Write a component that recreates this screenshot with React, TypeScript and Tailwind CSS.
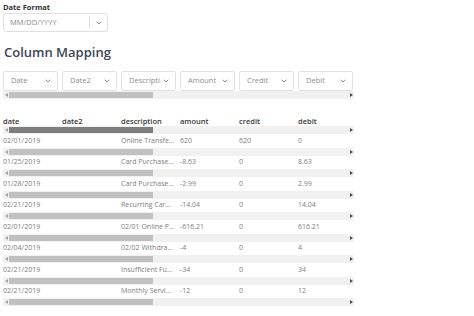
import React from 'react'

const FIELDS = ['Date', 'Date2', 'Descripti', 'Amount', 'Credit', 'Debit']
const HEADERS = ['date', 'date2', 'description', 'amount', 'credit', 'debit']

const ROWS = [
  ['02/01/2019', '', 'Online Transfe...', '620', '620', '0'],
  ['01/25/2019', '', 'Card Purchase...', '-8.63', '0', '8.63'],
  ['01/28/2019', '', 'Card Purchase...', '-2.99', '0', '2.99'],
  ['02/21/2019', '', 'Recurring Car...', '-14.04', '0', '14.04'],
  ['02/01/2019', '', '02/01 Online P...', '-616.21', '0', '616.21'],
  ['02/04/2019', '', '02/02 Withdra...', '-4', '0', '4'],
  ['02/21/2019', '', 'Insufficient Fu...', '-34', '0', '34'],
  ['02/21/2019', '', 'Monthly Servi...', '-12', '0', '12'],
]

function Chevron() {
  return (
    <svg width="6" height="4" viewBox="0 0 6 4" fill="none">
      <path d="M1 1l2 2 2-2" stroke="#8c8c8c" strokeWidth="1" strokeLinecap="round" strokeLinejoin="round" />
    </svg>
  )
}

function Scrollbar({ dark }: { dark?: boolean }) {
  return (
    <div className="flex items-center h-[8px] w-[351px] bg-[#f1f1f1]">
      <div className="w-[6px] flex justify-center">
        <div className="w-0 h-0 border-y-[2px] border-y-transparent border-r-[3px] border-r-[#a3a3a3]" />
      </div>
      <div className={`h-[6px] w-[144px] ${dark ? 'bg-[#7d7d7d]' : 'bg-[#c1c1c1]'}`} />
      <div className="flex-1" />
      <div className="w-[6px] flex justify-center">
        <div className="w-0 h-0 border-y-[2px] border-y-transparent border-l-[3px] border-l-[#505050]" />
      </div>
    </div>
  )
}

export default function App() {
  return (
    <div className="w-[474px] h-[316px] bg-white overflow-hidden px-[3px] pt-[2px] font-['Open_Sans','Noto_Sans',sans-serif]">
      <div className="text-[7.5px] font-bold text-[#333] leading-[10px]">Date Format</div>
      <div className="mt-[1px] w-[105px] h-[19px] border border-[#e0e0e0] rounded-[3px] flex items-center">
        <span className="flex-1 pl-[6px] text-[7.5px] text-[#8a8a8a]">MM/DD/YYYY</span>
        <div className="w-px h-[11px] bg-[#ddd]" />
        <div className="w-[17px] flex justify-center"><Chevron /></div>
      </div>

      <h2 className="mt-[10px] text-[13px] leading-[20px] font-semibold text-[#3e4654] pl-[1px]">Column Mapping</h2>

      <div className="mt-[9px] flex gap-[4px] w-[351px] overflow-hidden">
        {FIELDS.map(f => (
          <div key={f} className="shrink-0 w-[55px] h-[20px] border border-[#e2e2e2] rounded-[2px] flex items-center pl-[7px] pr-[6px]">
            <span className="flex-1 text-[7.5px] text-[#8e8e8e] overflow-hidden whitespace-nowrap">{f}</span>
            <Chevron />
          </div>
        ))}
      </div>
      <Scrollbar />

      <div className="mt-[15px]">
        <div className="flex h-[12px] items-end">
          {HEADERS.map(h => (
            <div key={h} className="w-[59px] shrink-0 text-[7.5px] font-semibold text-[#3a3a3a] leading-[10px]">{h}</div>
          ))}
        </div>
        <Scrollbar dark />
        {ROWS.map((r, i) => (
          <div key={i}>
            <div className="flex h-[13.5px] items-center">
              {r.map((c, j) => (
                <div key={j} className="w-[59px] shrink-0 pr-[3px] text-[7px] text-[#808080] leading-[10px] whitespace-nowrap overflow-hidden">{c}</div>
              ))}
            </div>
            <Scrollbar />
          </div>
        ))}
      </div>
    </div>
  )
}
